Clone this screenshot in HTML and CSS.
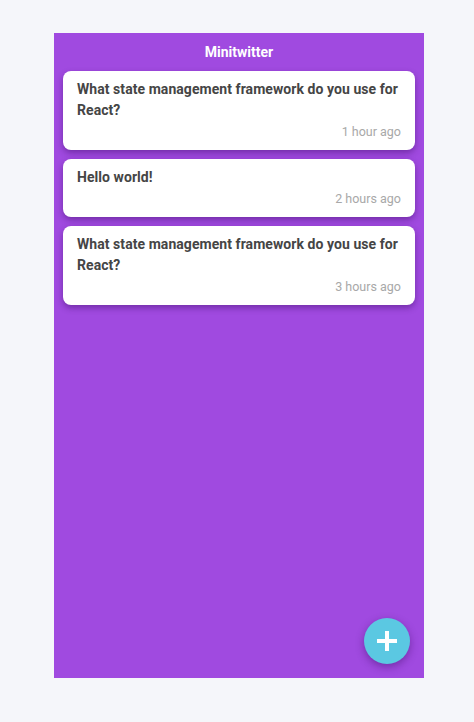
FILE: index.html
```html
<!DOCTYPE html>
<html>
<head>
<meta charset="utf-8">
<link rel="stylesheet" href="styles.css">
</head>
<body>
<div class="app">
  <header class="title">Minitwitter</header>
  <div class="feed">
    <div class="card">
      <div class="msg">What state management framework do you use for React?</div>
      <div class="time">1 hour ago</div>
    </div>
    <div class="card">
      <div class="msg">Hello world!</div>
      <div class="time">2 hours ago</div>
    </div>
    <div class="card">
      <div class="msg">What state management framework do you use for React?</div>
      <div class="time">3 hours ago</div>
    </div>
  </div>
  <button class="fab" aria-label="Add">
    <svg width="22" height="22" viewBox="0 0 22 22"><path d="M11 1v20M1 11h20" stroke="#fff" stroke-width="4" stroke-linecap="butt"/></svg>
  </button>
</div>
</body>
</html>
```
FILE: styles.css
```css
html, body {
  margin: 0;
  padding: 0;
  background: #f5f6fa;
  font-family: Roboto, "Liberation Sans", sans-serif;
}
body {
  padding: 33px 0 44px 54px;
}
.app {
  position: relative;
  width: 370px;
  height: 645px;
  background: #a04ae0;
  box-sizing: border-box;
}
.title {
  padding: 9px 0 9px;
  line-height: 20px;
  text-align: center;
  color: #fff;
  font-weight: 700;
  font-size: 14px;
}
.feed {
  display: flex;
  flex-direction: column;
  gap: 9px;
  padding: 0 9px;
}
.card {
  background: #fff;
  border-radius: 8px;
  padding: 8px 14px 8px;
  box-shadow: 0 3px 6px rgba(60, 10, 100, 0.45);
}
.msg {
  color: #454545;
  font-weight: 700;
  font-size: 14px;
  letter-spacing: 0.06px;
  line-height: 21px;
}
.time {
  color: #a8a8a8;
  font-size: 12.5px;
  line-height: 21px;
  text-align: right;
}
.fab {
  position: absolute;
  right: 14px;
  bottom: 14px;
  width: 46px;
  height: 46px;
  border-radius: 50%;
  border: none;
  padding: 0;
  background: #5bc8e2;
  display: flex;
  align-items: center;
  justify-content: center;
  box-shadow: 0 3px 8px rgba(60, 10, 100, 0.45);
}
```
